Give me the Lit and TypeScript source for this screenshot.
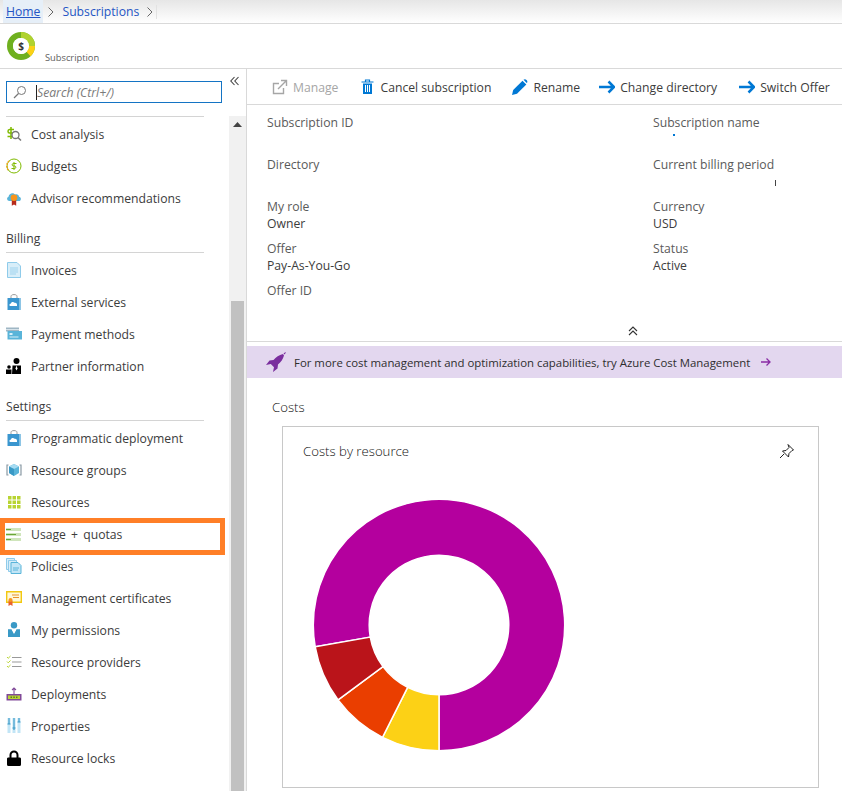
import { LitElement, html, css, svg } from 'lit';
import { customElement } from 'lit/decorators.js';

const BAG = svg`<path d="M5 4V2.500C5 1.200 6 .6 8 .6s3 .6 3 1.900V4" fill="none" stroke="#9a9a9a"/><path d="M1.500 4h13v12h-13z" fill="#3a96cf"/><path d="M13 4h1.500v12H13z" fill="#7fbfe3"/><path d="M4.500 12c-1.500 0-1.500-2.300.2-2.300C5 8 7.500 7.400 8.500 8.800c1.500-.4 3 .8 2.500 3.200z" fill="#fff"/>`;

const ICONS: Record<string, unknown> = {
  cost: svg`<path d="M5 1v12M8 3.500H3.500C1.500 3.500 1.500 7 3.500 7h3c2 0 2 3.500 0 3.500H1.500" fill="none" stroke="#7fba00" stroke-width="1.500"/><circle cx="9.500" cy="9" r="3.500" fill="#fff" stroke="#777" stroke-width="1.300"/><path d="M12 11.500l3 3" stroke="#777" stroke-width="1.500"/>`,
  budget: svg`<circle cx="8" cy="8" r="7" fill="none" stroke="#7fba00"/><path d="M3 3A7 7 0 0 0 3 13" fill="none" stroke="#f7a11a" stroke-width="1.600" stroke-dasharray="1.500 1.200"/><path d="M10.500 5.500H7.200C5.800 5.500 5.800 8 7.200 8h1.600c1.400 0 1.400 2.500 0 2.500H5.500M8 4v8" fill="none" stroke="#7fba00"/>`,
  advisor: svg`<path d="M3.500 11C.8 11 .2 7.500 2.500 6.800 3 3.500 7 2 9 4.500c2-1 4 .2 4 2.200 2.500.3 2.700 4.300-.2 4.300z" fill="#59b4d9"/><path d="M5.800 9.500v6.300l2.200-1.300 2.200 1.300V9.500z" fill="#b52a1c"/><circle cx="8" cy="7.800" r="3.300" fill="#f7941d"/>`,
  invoice: svg`<path d="M1.500.5h9.500l3.500 3.500v11.500h-13z" fill="#d8eef9" stroke="#8fcbea"/><path d="M4 6h8M4 8h8M4 10h8M4 12h6" stroke="#9fd3ee"/>`,
  bag: BAG,
  payment: svg`<path d="M0 1.500h13v4H0z" fill="#9fb6c4"/><path d="M0 3h13v1H0z" fill="#d7e3ea"/><path d="M1.500 5h14.500v8.500H1.500z" fill="#59b4d9"/><path d="M3.500 7h3v2h-3zM3.500 10.500h9v1h-9z" fill="#d9f0fa"/>`,
  partner: svg`<circle cx="10.500" cy="3" r="3" fill="#000"/><path d="M6.500 7.500h8.500v8.500h-9z" fill="#000"/><path d="M10.500 7.500l-1 3 1 2 1-2z" fill="#fff"/><circle cx="3" cy="9" r="1.800" fill="#000"/><path d="M0 11.500h5.500V16H0z" fill="#000"/>`,
  groups: svg`<path d="M2.500 3H1v10h1.500M13.500 3H15v10h-1.500" fill="none" stroke="#8a9aa5" stroke-width="1.200"/><path d="M8 2l5 2.500v6.500l-5 3-5-3V4.500z" fill="#59b4d9"/><path d="M8 2l5 2.500L8 7 3 4.500z" fill="#a5dbf2"/><path d="M8 7v7l-5-3V4.500z" fill="#3999c6"/>`,
  grid: svg`<path d="M2 2h3.500v3.500H2zM6.500 2H10v3.500H6.500zM11 2h3.500v3.500H11zM2 6.500h3.500V10H2zM6.500 6.500H10V10H6.500zM11 6.500h3.500V10H11zM2 11h3.500v3.500H2zM6.500 11H10v3.500H6.500zM11 11h3.500v3.500H11z" fill="#b8d432"/>`,
  usage: svg`<path d="M0 2h15v3H0zM0 7h15v3H0zM0 12h15v3H0z" fill="#cfe5bb"/><path d="M0 3h5v1H0zM0 8h10v1H0zM0 13h5v1H0z" fill="#6aa637"/>`,
  policies: svg`<path d="M.5.500h8v11h-8z" fill="#d8eef9" stroke="#8fcbea"/><path d="M2.500 2.500h8v11h-8z" fill="#d8eef9" stroke="#8fcbea"/><path d="M5 4.500h7l3 3v8H5z" fill="#c2e5f6" stroke="#59b4d9"/><path d="M7 10h6M7 12h5" stroke="#59b4d9"/>`,
  cert: svg`<path d="M.7 1.700h14.600v10.600H.7z" fill="#fff8d8" stroke="#f2c811" stroke-width="1.400"/><path d="M6 5h7M7 7.500h6" stroke="#e8912d"/><path d="M2.500 10.500h4V16L4.500 14.800 2.500 16z" fill="#e8612d"/><circle cx="4.500" cy="10" r="2" fill="#f7941d"/>`,
  person: svg`<circle cx="8" cy="3.200" r="3.200" fill="#3999c6"/><path d="M2 7.200h3.500L8 12l2.500-4.800H14V15H2z" fill="#3999c6"/><path d="M5.800 7.200h4.400L8 11.300z" fill="#fff"/>`,
  providers: svg`<path d="M6 3.500h9.500M6 8h9.500M6 12.500h9.500" stroke="#999" stroke-width="1.200"/><path d="M1 3l1.200 1.300L4.500 2M1 7.500l1.200 1.300L4.500 6.500M1 12l1.200 1.300L4.500 11" fill="none" stroke="#b8d432"/>`,
  deploy: svg`<path d="M8 8V2M6 4l2-2 2 2" fill="none" stroke="#804998" stroke-width="1.100"/><path d="M.5 8h15v6.500H.5z" fill="#804998"/><path d="M2 9.500h12V13H2z" fill="#b8d432"/><path d="M4.500 10.500h1.500v1.500H4.500zM7.300 10.500h1.500v1.500H7.300zM10 10.500h1.500v1.500H10z" fill="#5c7a20"/>`,
  props: svg`<path d="M1.500 0h3v15h-3zM6.500 0h3v15h-3zM11.500 0h3v15h-3z" fill="#c2e5f6"/><path d="M3 0v6M8 0v12M13 0v4M1.500 6h3M6.500 10h3M11.500 4h3" stroke="#3999c6" stroke-width="1.100"/>`,
  lock: svg`<path d="M4.500 8V5a3.500 3.500 0 0 1 7 0v3" fill="none" stroke="#000" stroke-width="2"/><path d="M2 7.500h12a1.500 1.500 0 0 1 1 1.500v5.500a1.500 1.500 0 0 1-1.500 1.500h-11A1.500 1.500 0 0 1 1 14.500V9a1.500 1.500 0 0 1 1-1.500z" fill="#000"/>`,
};

interface MenuItem { label: string; icon: string; highlight?: boolean; }
interface MenuGroup { title?: string; items: MenuItem[]; }

const MENU: MenuGroup[] = [
  { items: [
    { label: 'Cost analysis', icon: 'cost' },
    { label: 'Budgets', icon: 'budget' },
    { label: 'Advisor recommendations', icon: 'advisor' },
  ] },
  { title: 'Billing', items: [
    { label: 'Invoices', icon: 'invoice' },
    { label: 'External services', icon: 'bag' },
    { label: 'Payment methods', icon: 'payment' },
    { label: 'Partner information', icon: 'partner' },
  ] },
  { title: 'Settings', items: [
    { label: 'Programmatic deployment', icon: 'bag' },
    { label: 'Resource groups', icon: 'groups' },
    { label: 'Resources', icon: 'grid' },
    { label: 'Usage + quotas', icon: 'usage', highlight: true },
    { label: 'Policies', icon: 'policies' },
    { label: 'Management certificates', icon: 'cert' },
    { label: 'My permissions', icon: 'person' },
    { label: 'Resource providers', icon: 'providers' },
    { label: 'Deployments', icon: 'deploy' },
    { label: 'Properties', icon: 'props' },
    { label: 'Resource locks', icon: 'lock' },
  ] },
];

const DETAILS: [string, string?, string?][] = [
  ['Subscription ID'], ['Subscription name', undefined, 'dot'],
  ['Directory'], ['Current billing period', undefined, 'tick'],
  ['My role', 'Owner'], ['Currency', 'USD'],
  ['Offer', 'Pay-As-You-Go'], ['Status', 'Active'],
  ['Offer ID'],
];

// start/end in degrees, clockwise from 12 o'clock
const SLICES = [
  { from: 260, to: 540, color: '#b4009e' },
  { from: 180, to: 206.7, color: '#fcd116' },
  { from: 206.7, to: 233.4, color: '#ea3e00' },
  { from: 233.4, to: 260, color: '#ba141a' },
];

function slicePath(from: number, to: number) {
  const pt = (r: number, a: number) => {
    const t = (a * Math.PI) / 180;
    return `${(125 + r * Math.sin(t)).toFixed(2)} ${(125 - r * Math.cos(t)).toFixed(2)}`;
  };
  const large = to - from > 180 ? 1 : 0;
  return `M${pt(125.7, from)}A125.7 125.7 0 ${large} 1 ${pt(125.7, to)}L${pt(69.8, to)}A69.8 69.8 0 ${large} 0 ${pt(69.8, from)}Z`;
}

const ARROW = svg`<path d="M0 8h15M9.500 2.500L15 8l-5.500 5.500" fill="none" stroke="#0078d4" stroke-width="2.500"/>`;

@customElement('app-root')
export class AppRoot extends LitElement {
  static styles = css`
    :host {
      display: block;
      width: 842px;
      height: 791px;
      overflow: hidden;
      background: #fff;
      font-family: 'Open Sans', 'Noto Sans', sans-serif;
      font-size: 12.2px;
      color: #3c3c3c;
    }

    .crumbs {
      display: flex;
      align-items: center;
      height: 23px;
      border-bottom: 1px solid #d9d9d9;
      background: linear-gradient(#e6e6e6, #fff);
      color: #2455c4;
    }
    .crumbs a {
      color: inherit;
    }
    .home {
      display: block;
      margin: 0 -3px 0 3px;
      padding: 0 3px;
      line-height: 23px;
      background: #e6eff8;
      text-decoration: underline;
    }
    .sep {
      display: flex;
      margin: 0 8px;
    }
    .crumb-end {
      height: 14px;
      margin-left: -5px;
      border-left: 1px solid #e2e2e2;
    }

    .title {
      display: flex;
      height: 44px;
      padding-left: 7px;
      border-bottom: 1px solid #d9d9d9;
    }
    .logo {
      margin-top: 8px;
    }
    .title span {
      margin: 27px 0 0 10px;
      font-size: 9.3px;
      line-height: 14px;
      color: #606060;
    }

    .body {
      display: flex;
      height: 722px;
    }

    aside {
      display: flex;
      flex: none;
      width: 246px;
      border-right: 1px solid #d9d9d9;
    }
    .nav {
      width: 229px;
      flex: none;
    }
    .search {
      display: flex;
      align-items: center;
      width: 214px;
      height: 20px;
      margin: 12px 0 0 6px;
      border: 1px solid #1474c4;
      font-style: italic;
      color: #7a7a7a;
    }
    .search svg {
      margin: 0 9px 0 6px;
    }
    .caret {
      width: 1px;
      height: 15px;
      background: #222;
    }
    .groups {
      width: 198px;
      margin: 13px 0 0 6px;
      padding-top: 1px;
      border-top: 1px solid #d4d4d4;
    }
    .group-title {
      height: 25px;
      margin: 13px 0 1px;
      line-height: 24px;
      font-weight: 500;
      border-bottom: 1px solid #d4d4d4;
    }
    .row {
      position: relative;
      display: flex;
      align-items: center;
      width: 220px;
      height: 32px;
      white-space: nowrap;
    }
    .row svg {
      flex: none;
      margin-right: 9px;
    }
    .row.highlight {
      word-spacing: 2px;
    }
    .row.highlight::after {
      content: '';
      position: absolute;
      left: -6px;
      top: 0;
      width: 225px;
      height: 37px;
      box-sizing: border-box;
      border: 5px solid #ff7f27;
    }

    .rail {
      display: flex;
      flex-direction: column;
      flex: 1;
    }
    .collapse {
      display: flex;
      height: 47px;
      padding: 7px 0 0 1px;
      box-sizing: border-box;
    }
    .track {
      flex: 1;
      display: flex;
      flex-direction: column;
      background: #f1f1f1;
    }
    .up {
      display: flex;
      justify-content: center;
      height: 185px;
      padding-top: 6px;
      box-sizing: border-box;
    }
    .thumb {
      flex: 1;
      margin: 0 2px;
      background: #c1c1c1;
    }

    main {
      flex: 1;
      min-width: 0;
    }
    .toolbar {
      display: flex;
      align-items: center;
      height: 34px;
      padding: 1px 0 0 25px;
      border-bottom: 1px solid #d9d9d9;
      white-space: nowrap;
    }
    .tool {
      display: flex;
      align-items: center;
      gap: 5px;
      margin-right: 19px;
    }
    .tool:nth-child(1) {
      margin-right: 22px;
    }
    .tool:nth-child(2) {
      margin-right: 21px;
    }
    .tool:nth-child(4) {
      margin-right: 22px;
    }
    .tool.off {
      color: #a6a6a6;
    }

    .details {
      display: grid;
      grid-template-columns: 386px 1fr;
      grid-auto-rows: 42px;
      height: 237px;
      padding: 9px 0 0 20px;
      box-sizing: border-box;
      border-bottom: 1px solid #d9d9d9;
      position: relative;
    }
    .label, .value {
      line-height: 17px;
      height: 17px;
    }
    .label {
      color: #5a5a5a;
    }
    .mark {
      display: block;
      height: 8px;
    }
    .mark.dot {
      margin: 3px 0 0 20px;
      width: 2px;
      height: 2px;
      background: #0078d4;
    }
    .mark.tick {
      margin: 7px 0 0 122px;
      width: 1px;
      height: 6px;
      background: #444;
    }
    .expand {
      position: absolute;
      left: 381px;
      bottom: 5px;
      display: flex;
    }

    .banner {
      display: flex;
      align-items: center;
      height: 32px;
      margin-top: 4px;
      padding-left: 19px;
      background: #e3d7ef;
      color: #2e2e2e;
      font-size: 11.4px;
    }
    .banner .rocket {
      margin-right: 8px;
    }
    .banner .go {
      margin-left: 11px;
    }

    .costs {
      margin: 21px 0 0 25px;
      line-height: 17px;
      font-size: 13.2px;
      font-weight: 300;
      color: #111;
    }
    .card {
      width: 535px;
      height: 360px;
      margin: 10px 0 0 35px;
      border: 1px solid #c8c8c8;
    }
    .card-head {
      display: flex;
      justify-content: space-between;
      padding: 16px 23px 0 20px;
      height: 57px;
      line-height: 17px;
      font-size: 13.2px;
      font-weight: 300;
      color: #111;
    }
    .donut {
      display: block;
      margin-left: 31px;
      overflow: visible;
    }
  `;

  private renderIcon(name: string) {
    return html`<svg width="16" height="16" viewBox="0 0 16 16">${ICONS[name]}</svg>`;
  }

  private renderChevron() {
    return html`<svg class="sep" width="6" height="10" viewBox="0 0 6 10">
      <path d="M.5 .5L5 5 .5 9.500" fill="none" stroke="#666"/>
    </svg>`;
  }

  render() {
    return html`
      <nav class="crumbs">
        <a class="home">Home</a>
        ${this.renderChevron()}
        <a>Subscriptions</a>
        ${this.renderChevron()}
        <div class="crumb-end"></div>
      </nav>

      <header class="title">
        <svg class="logo" width="28" height="28" viewBox="0 0 28 28">
          <circle cx="14" cy="14" r="11" fill="none" stroke="#6fb01f" stroke-width="6"/>
          <path d="M14 3a11 11 0 0 1 11 11" fill="none" stroke="#b0d22f" stroke-width="6"/>
          <path d="M25 14a11 11 0 0 1-3.500 8" fill="none" stroke="#fcd116" stroke-width="6"/>
          <circle cx="14" cy="14" r="8" fill="#fff"/>
          <text x="14" y="17.500" font-size="10" font-weight="700" text-anchor="middle" fill="#333">$</text>
        </svg>
        <span>Subscription</span>
      </header>

      <div class="body">
        <aside>
          <div class="nav">
            <div class="search">
              <svg width="14" height="14" viewBox="0 0 14 14">
                <circle cx="8.500" cy="5.500" r="4" fill="none" stroke="#777"/>
                <path d="M5.500 8.500L1 13" stroke="#777" stroke-width="1.200"/>
              </svg>
              <i class="caret"></i>Search (Ctrl+/)
            </div>
            <div class="groups">
              ${MENU.map((group) => html`
                ${group.title ? html`<div class="group-title">${group.title}</div>` : ''}
                ${group.items.map((item) => html`
                  <div class="row ${item.highlight ? 'highlight' : ''}">
                    ${this.renderIcon(item.icon)}${item.label}
                  </div>
                `)}
              `)}
            </div>
          </div>
          <div class="rail">
            <div class="collapse">
              <svg width="9" height="10" viewBox="0 0 9 10">
                <path d="M4.500 1L.8 5l3.700 4M8.500 1L4.800 5l3.700 4" fill="none" stroke="#444" stroke-width="1.100"/>
              </svg>
            </div>
            <div class="track">
              <div class="up">
                <svg width="9" height="5" viewBox="0 0 9 5"><path d="M4.500 0L9 5H0z" fill="#444"/></svg>
              </div>
              <div class="thumb"></div>
            </div>
          </div>
        </aside>

        <main>
          <div class="toolbar">
            <div class="tool off">
              <svg width="16" height="16" viewBox="0 0 16 16">
                <path d="M11.500 9v5.500h-10v-10H7" fill="none" stroke="#a6a6a6" stroke-width="1.400"/>
                <path d="M6 10l8-8M9 1.500h5.500V7" fill="none" stroke="#a6a6a6" stroke-width="1.400"/>
              </svg>
              Manage
            </div>
            <div class="tool">
              <svg width="15" height="16" viewBox="0 0 14 16">
                <path d="M1 3h12M5 3V1h4v2" fill="none" stroke="#0078d4" stroke-width="1.200"/>
                <path d="M2.500 4.500h9V15h-9z" fill="#0078d4"/>
                <path d="M5 6v7M7 6v7M9 6v7" stroke="#fff"/>
              </svg>
              Cancel subscription
            </div>
            <div class="tool">
              <svg width="16" height="16" viewBox="0 0 16 16">
                <path d="M0 16l1.200-5L10.500 1.700l3.800 3.800L5 14.800z" fill="#0078d4"/>
                <path d="M11.500 .8c1-1 2-.8 3 .2s1.200 2 .2 3z" fill="#0078d4"/>
              </svg>
              Rename
            </div>
            <div class="tool">
              <svg width="16" height="16" viewBox="0 0 16 16">${ARROW}</svg>
              Change directory
            </div>
            <div class="tool">
              <svg width="16" height="16" viewBox="0 0 16 16">${ARROW}</svg>
              Switch Offer
            </div>
          </div>

          <section class="details">
            ${DETAILS.map(([label, value, mark]) => html`
              <div>
                <div class="label">${label}</div>
                ${value ? html`<div class="value">${value}</div>` : ''}
                ${mark ? html`<i class="mark ${mark}"></i>` : ''}
              </div>
            `)}
            <svg class="expand" width="10" height="10" viewBox="0 0 10 10">
              <path d="M1 5l4-4 4 4M1 9l4-4 4 4" fill="none" stroke="#333" stroke-width="1.100"/>
            </svg>
          </section>

          <div class="banner">
            <svg class="rocket" width="20" height="20" viewBox="0 0 20 20">
              <path d="M20 0l-2.500 1.200 1.300 1.300zM17 2C13 3 10 5 7.500 8L3.500 8.500 0 13l4.800-1 3.200 3.200L7 20l4.500-3.500.5-4c3-2.500 5-5.500 6-9z" fill="#7a2e9e"/>
            </svg>
            For more cost management and optimization capabilities, try Azure Cost Management
            <svg class="go" width="10" height="10" viewBox="0 0 10 10">
              <path d="M0 5h9M5.500 1.500L9 5 5.500 8.500" fill="none" stroke="#8a2da5" stroke-width="1.300"/>
            </svg>
          </div>

          <div class="costs">Costs</div>

          <div class="card">
            <div class="card-head">
              <span>Costs by resource</span>
              <svg width="16" height="16" viewBox="0 0 16 16">
                <path d="M9.500 1l5.500 5.500-1.500.5-3 3-.5 3.500-6-6L7.500 7l3-3z" fill="none" stroke="#222" transform="translate(-.5 .5)"/>
                <path d="M5 11l-4 4" stroke="#222"/>
              </svg>
            </div>
            <svg class="donut" width="250" height="250" viewBox="0 0 250 250">
              ${SLICES.map((s) => svg`<path d=${slicePath(s.from, s.to)} fill=${s.color} stroke="#fff" stroke-width="1.500"/>`)}
            </svg>
          </div>
        </main>
      </div>
    `;
  }
}
